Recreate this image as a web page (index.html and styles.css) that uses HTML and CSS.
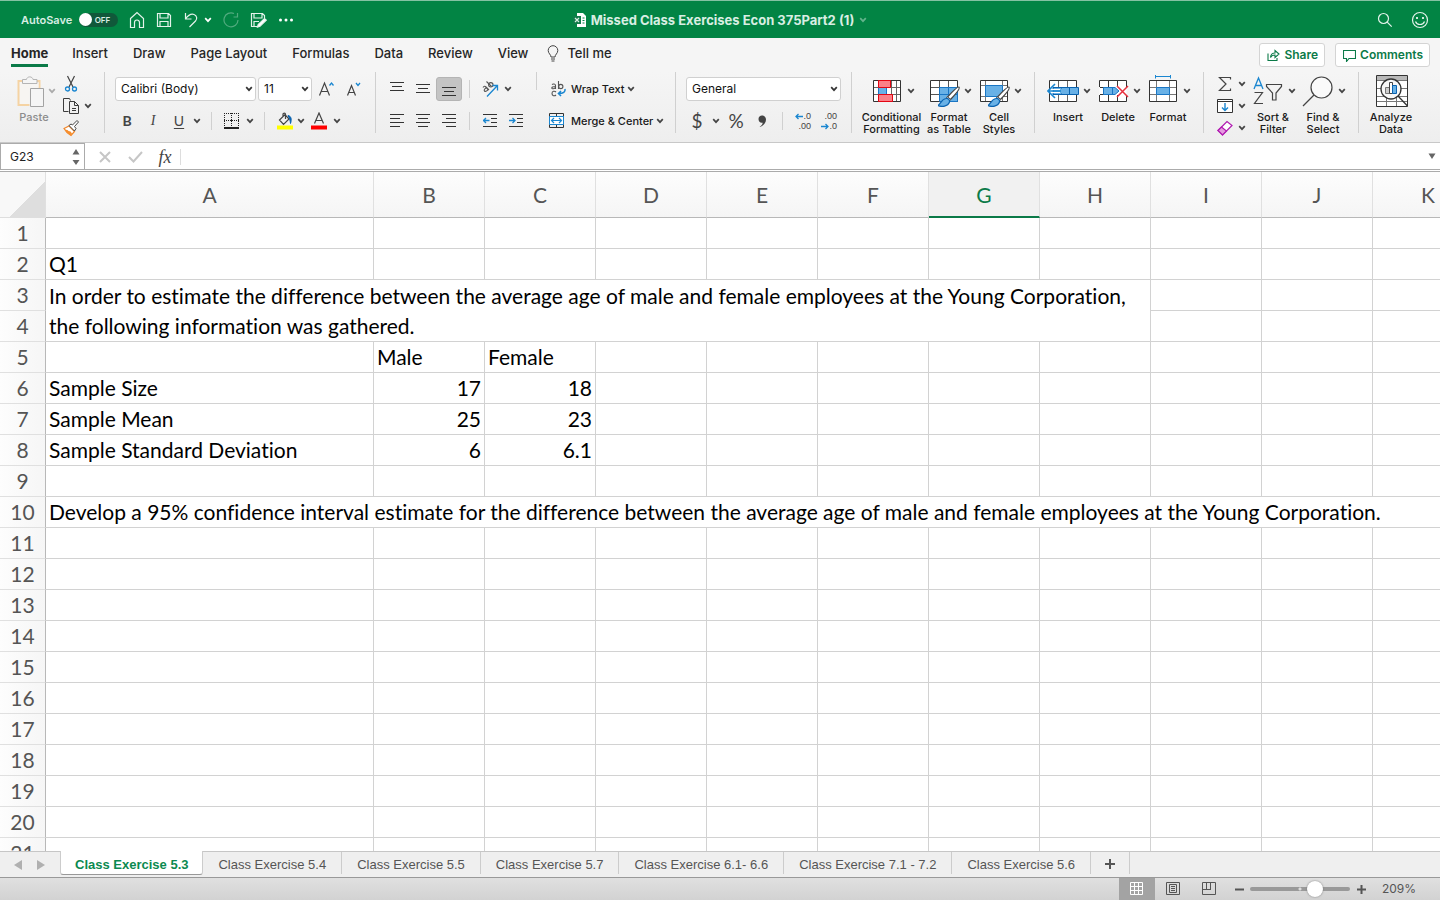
FILE: index.html
```html
<!DOCTYPE html>
<html lang="en">
<head>
<meta charset="utf-8">
<meta name="viewport" content="width=device-width, initial-scale=1">
<title>Missed Class Exercises Econ 375Part2 (1)</title>
<link rel="stylesheet" href="styles.css">
</head>
<body>
<svg width="0" height="0" class="defs" aria-hidden="true">
  <symbol id="chev" viewBox="0 0 8 6"><path d="M1.2 1.2 4 4.2 6.8 1.2" fill="none" stroke="currentColor" stroke-width="1.7"/></symbol>
  <symbol id="brush" viewBox="0 0 22 22"><path d="M21 1.200c1 1-1.500 5-8.500 12.300l-3-2.500C15.500 4.500 20 .3 21 1.200z" fill="#fff" stroke="#444" stroke-width="1.200"/><path d="m9.500 11 3 2.500-1 1.500-3.500-3z" fill="#fff" stroke="#555"/><path d="M8 12.500c2-.3 4.300 1.500 3.300 4C10 20 4 21.500-.5 19.500c3.500-.8 3.500-6.500 8.500-7z" fill="#69b1e6" stroke="#0a63b0" stroke-width="1.200"/></symbol>
</svg>

<header class="titlebar">
  <div class="quick">
    <label class="autosave">AutoSave <input type="checkbox" role="switch"><span class="switch"><span class="off">OFF</span></span></label>
    <button class="tb" aria-label="Home"><svg width="16" height="18" viewBox="0 0 16 18"><path d="M1.500 7.500 8 1.500l6.500 6v9h-4v-5a2.500 2.500 0 0 0-5 0v5h-4z"/></svg></button>
    <button class="tb" aria-label="Save"><svg width="16" height="18" viewBox="0 0 16 18"><path d="M1.500 2.500h11l2 2v11h-13zM4 2.500v4.500h8v-4.500M4 15.500v-5h8v5"/></svg></button>
    <button class="tb undo" aria-label="Undo"><svg width="16" height="18" viewBox="0 0 16 18"><path d="M2.500 2v6h6M2.500 8C5 4.500 8 2.500 11 3.500c3 1 3.500 4.500 1.500 6.500L6.500 16"/></svg></button>
    <button class="tb tiny" aria-label="Undo options"><svg width="8" height="6"><use href="#chev"/></svg></button>
    <button class="tb faded" aria-label="Redo"><svg width="16" height="18" viewBox="0 0 16 18"><path d="M11 2.500A7 7 0 1 0 15 9M10.500 6h4V2"/></svg></button>
    <button class="tb" aria-label="Save as"><svg width="17" height="18" viewBox="0 0 17 18"><path d="M7 15.500H1.500v-13h11l2 2V7M4 2.500V7h8V2.500M4 15.500v-5h5"/><path d="m7.500 16 .7-2.500 6.300-6 1.800 1.700-6.300 6z" fill="#fff"/></svg></button>
    <button class="tb" aria-label="More"><svg width="16" height="18" viewBox="0 0 16 18"><g fill="#fff" stroke="none"><circle cx="2.500" cy="9" r="1.500"/><circle cx="8" cy="9" r="1.500"/><circle cx="13.500" cy="9" r="1.500"/></g></svg></button>
  </div>
  <h1 class="doc"><svg width="13" height="15" viewBox="0 0 13 15"><path d="M4 1h6l3 3v11H4z" fill="#fff"/><path d="M9.500 6h2M9.500 8.500h2M9.500 11h2" stroke="#028444"/><path d="M0 4h8v8H0z" fill="#107c4a"/><path d="m2 6 4 4M6 6l-4 4" stroke="#d9eee3" stroke-width="1.200"/></svg>Missed Class Exercises Econ 375Part2 (1)<svg class="dim" width="8" height="6"><use href="#chev"/></svg></h1>
  <div class="tb-right">
    <button class="tb" aria-label="Search"><svg width="16" height="16" viewBox="0 0 16 16"><circle cx="6.500" cy="6.500" r="5"/><path d="m10.200 10.200 4.500 4.500"/></svg></button>
    <button class="tb" aria-label="Feedback"><svg width="18" height="18" viewBox="0 0 18 18"><circle cx="9" cy="9" r="7.500"/><path d="M4.500 10.500c1.500 4 7.500 4 9 0"/><path d="M6 6v2M12 6v2" stroke-width="1.800"/></svg></button>
  </div>
</header>

<nav class="tabs">
  <button class="tab on">Home</button>
  <button class="tab">Insert</button>
  <button class="tab">Draw</button>
  <button class="tab">Page Layout</button>
  <button class="tab">Formulas</button>
  <button class="tab">Data</button>
  <button class="tab">Review</button>
  <button class="tab">View</button>
  <button class="tab tell"><svg width="12" height="17" viewBox="0 0 12 17" fill="none" stroke="#444"><path d="M4 12c0-2.500-2.800-3.500-2.800-6.500a4.800 4.800 0 0 1 9.600 0c0 3-2.800 4-2.800 6.500zM4 14h4M4.500 16h3"/></svg>Tell me</button>
  <div class="actions">
    <button class="act"><svg width="13" height="12" viewBox="0 0 13 12"><path d="M1 4.500v7h9V9M3.500 8.500c0-3 2-4.500 4.500-4.500V1.500L12 5 8 8.500V6C6 6 4.500 6.500 3.500 8.500z"/></svg>Share</button>
    <button class="act"><svg width="13" height="13" viewBox="0 0 13 13"><path d="M.5 1.500h12v8H6l-2.500 3v-3h-3z"/></svg>Comments</button>
  </div>
</nav>

<section class="ribbon" aria-label="Home ribbon">
  <div class="group g-clip">
    <button class="big paste"><span class="icons"><svg width="32" height="32" viewBox="0 0 32 32" fill="none"><path d="M7.500 6h-4v24h11M22 6h2.500v7" stroke="#f5d3a3" stroke-width="2"/><path d="M5 7.500h18.500v5h-9V29H5z" fill="#f7f5f2"/><path d="M7.500 8.500v-4h4c.5-3.500 6-3.500 6.500 0h4v4z" fill="#f5f5f5" stroke="#b5b5b5"/><path d="M15.500 13.500h13v18h-13z" fill="#f5f5f5" stroke="#a3a3a3"/></svg><svg class="chev" width="8" height="6"><use href="#chev"/></svg></span>Paste</button>
    <div class="stack">
      <button class="sm" aria-label="Cut"><svg width="16" height="18" viewBox="0 0 16 18" fill="none"><path d="m4.500 1 5.500 11M11.500 1 6 12" stroke="#444" stroke-width="1.200"/><circle cx="4.500" cy="14" r="2" stroke="#1a86d0" stroke-width="1.300"/><circle cx="11.500" cy="14" r="2" stroke="#1a86d0" stroke-width="1.300"/></svg></button>
      <button class="sm" aria-label="Copy"><svg width="16" height="18" viewBox="0 0 16 18" fill="none" stroke="#3c3c3c"><path d="M5.500 14.500h-5v-13h6l1 2M6.500 4.500h5l4 4v8h-9zM11.500 4.500v4h4M9 11.500h4M9 13.500h4"/></svg><svg class="chev" width="8" height="6"><use href="#chev"/></svg></button>
      <button class="sm" aria-label="Format painter"><svg width="16" height="18" viewBox="0 0 16 18"><path d="M1 9.500 6 7l5.500 5.500-3.500 4C5 15 3 13 1 9.500z" fill="#fff" stroke="#f0862a" stroke-width="1.200"/><path d="m1.500 10.500 3 .5 1 1 2 .5 1.500 2-1 2C5 15 3.500 13.500 1.500 10.500z" fill="#f78f2e"/><path d="m6 6.500 2-1.500 1.500 1L14 1.500 15.500 3l-4 4.500 1.500 2-1.500 2.500z" fill="#fff" stroke="#444"/></svg></button>
    </div>
  </div>

  <div class="group g-font">
    <div class="rows">
      <div class="row fields">
        <span class="pick w-font"><select aria-label="Font"><option>Calibri (Body)</option></select><svg width="8" height="6"><use href="#chev"/></svg></span>
        <span class="pick w-size"><select aria-label="Font size"><option>11</option></select><svg width="8" height="6"><use href="#chev"/></svg></span>
        <button class="ib" aria-label="Increase font size"><svg width="18" height="18" viewBox="0 0 18 18" fill="none"><path d="M1.500 15.500 6.500 3l5 12.500M3.200 11.500h6.600" stroke="#444" stroke-width="1.200"/><path d="m11.500 5.500 2-2.500 2 2.500" stroke="#1a86d0" stroke-width="1.300"/></svg></button>
        <button class="ib" aria-label="Decrease font size"><svg width="18" height="18" viewBox="0 0 18 18" fill="none"><path d="m3.500 15.500 4-10 4 10M4.800 12.500h5.400" stroke="#444" stroke-width="1.200"/><path d="m12 3 2 2.500L16 3" stroke="#1a86d0" stroke-width="1.300"/></svg></button>
      </div>
      <div class="row">
        <button class="ib b">B</button><button class="ib i">I</button><button class="ib u">U</button>
        <button class="cv" aria-label="Underline options"><svg width="8" height="6"><use href="#chev"/></svg></button>
        <span class="sep wide"></span>
        <button class="ib n" aria-label="Borders"><svg width="16" height="16" viewBox="0 0 16 16" fill="none" stroke="#222"><path d="M0 .5h15M0 7.500h15M.5 0v14M7.500 0v14M14.500 0v14" stroke-dasharray="1 1"/><path d="M6 7.500h3M7.500 6v3"/><path d="M0 15h15" stroke-width="2"/></svg></button>
        <button class="cv m2" aria-label="Border options"><svg width="8" height="6"><use href="#chev"/></svg></button>
        <span class="sep wide"></span>
        <button class="ib n" aria-label="Fill color"><svg width="18" height="18" viewBox="0 0 18 18" fill="none"><path d="M3.500 8 9 2.500 13 7l-5.500 5.500zM7 4.500V2.200c0-1.500 2.500-1.500 2.500 0V7" stroke="#444" stroke-width="1.200"/><path d="M12 3.500C15 4 16 7 14.500 11.500 14.200 9 14 7 12 3.500z" fill="#0a63b0" stroke="#0a63b0"/><path d="M1 13.500h16v4H1z" fill="#ff0"/></svg></button>
        <button class="cv" aria-label="Fill color options"><svg width="8" height="6"><use href="#chev"/></svg></button>
        <button class="ib n m2" aria-label="Font color"><svg width="18" height="18" viewBox="0 0 18 18" fill="none"><path d="M4.500 11.500 9 1l4.500 10.500M6 8.500h6" stroke="#444" stroke-width="1.200"/><path d="M1 13.500h16v4H1z" fill="#f00"/></svg></button>
        <button class="cv m2" aria-label="Font color options"><svg width="8" height="6"><use href="#chev"/></svg></button>
      </div>
    </div>
  </div>

  <div class="group g-align">
    <div class="rows">
      <div class="row">
        <button class="ib" aria-label="Top align"><svg class="ln" width="14" height="14" viewBox="0 0 14 14"><path d="M0 .5h14M2 4.500h10M0 8.500h14"/></svg></button>
        <button class="ib" aria-label="Middle align"><svg class="ln" width="14" height="14" viewBox="0 0 14 14"><path d="M0 2.500h14M2 6.500h10M0 10.500h14"/></svg></button>
        <button class="ib" aria-label="Bottom align" aria-pressed="true"><svg class="ln" width="14" height="14" viewBox="0 0 14 14"><path d="M0 5.500h14M2 9.500h10M0 13.500h14"/></svg></button>
        <span class="sep"></span>
        <button class="ib" aria-label="Orientation"><svg width="18" height="18" viewBox="0 0 18 18" fill="none"><g stroke="#555" stroke-width="1.100"><path d="M2 7.500c1-1.500 2-1.500 3-.5l3 3M5.500 7.500C4 8.500 2.500 10 3.500 11s3 0 3.500-2M5.500 1.500l5 5"/><circle cx="9.800" cy="4.800" r="2.200"/></g><path d="M6 16.500 16 6M11.500 5.500H16.500V10.500" stroke="#1a86d0" stroke-width="1.300"/></svg></button>
        <button class="cv" aria-label="Orientation options"><svg width="8" height="6"><use href="#chev"/></svg></button>
      </div>
      <div class="row">
        <button class="ib" aria-label="Align left"><svg class="ln" width="14" height="14" viewBox="0 0 14 14"><path d="M0 .5h14M0 4.500h10M0 8.500h14M0 12.500h10"/></svg></button>
        <button class="ib" aria-label="Center"><svg class="ln" width="14" height="14" viewBox="0 0 14 14"><path d="M0 .5h14M2 4.500h10M0 8.500h14M2 12.500h10"/></svg></button>
        <button class="ib" aria-label="Align right"><svg class="ln" width="14" height="14" viewBox="0 0 14 14"><path d="M0 .5h14M4 4.500h10M0 8.500h14M4 12.500h10"/></svg></button>
        <span class="sep"></span>
        <button class="ib" aria-label="Decrease indent"><svg class="ln" width="14" height="14" viewBox="0 0 14 14"><path d="M0 .5h14M8 4.500h6M8 8.500h6M0 12.500h14"/><path d="M6.500 6.500h-6M3 4 .5 6.500 3 9" stroke="#1a86d0" stroke-width="1.300"/></svg></button>
        <button class="ib" aria-label="Increase indent"><svg class="ln" width="14" height="14" viewBox="0 0 14 14"><path d="M0 .5h14M8 4.500h6M8 8.500h6M0 12.500h14"/><path d="M0 6.500h6M3.500 4 6 6.500 3.500 9" stroke="#1a86d0" stroke-width="1.300"/></svg></button>
      </div>
    </div>
    <span class="sep short"></span>
    <div class="rows">
      <button class="row txt"><svg width="20" height="18" viewBox="0 0 20 18" fill="none"><g stroke="#555" stroke-width="1.100"><path d="M5 4.500c1-.8 3.500-.8 3.500 1V9M8.500 6.500c-2 0-3.700 0-3.700 1.400S7.500 9 8.500 7.500M11.500 1v8"/><circle cx="13.800" cy="6.500" r="2.100"/><path d="M9 12c-1.500-1.500-4-.8-4 1.500s2.500 3 4 1.500"/></g><path d="M18 9c.5 3-1.500 4.500-6.500 4.500M14 11l-2.500 2.500L14 16" stroke="#1a86d0" stroke-width="1.600"/></svg>Wrap Text<svg class="chev" width="8" height="6"><use href="#chev"/></svg></button>
      <button class="row txt"><svg width="20" height="18" viewBox="0 0 20 18" fill="none"><path d="M2.500 1.500h14v14h-14zM9.500 1v3M9.500 13v3" stroke="#333"/><path d="M2.500 4.500h14v8h-14z" fill="#fff" stroke="#1a86d0"/><path d="M5 8.500h9M7 6 4.500 8.500 7 11M12 6l2.500 2.500L12 11" stroke="#1a86d0" stroke-width="1.200"/></svg>Merge &amp; Center<svg class="chev" width="8" height="6"><use href="#chev"/></svg></button>
    </div>
  </div>

  <div class="group g-num">
    <div class="rows">
      <div class="row"><span class="pick w-num"><select aria-label="Number format"><option>General</option></select><svg width="8" height="6"><use href="#chev"/></svg></span></div>
      <div class="row">
        <button class="ib n sym" aria-label="Currency">$</button>
        <button class="cv m" aria-label="Currency options"><svg width="8" height="6"><use href="#chev"/></svg></button>
        <button class="ib m2 sym" aria-label="Percent">%</button>
        <button class="ib" aria-label="Comma style"><svg width="10" height="14" viewBox="0 0 10 14"><path d="M5 1.500c2.500 0 4 1.700 4 4 0 4-3 6.500-6.500 7.500 2-1.500 3-2.500 3.200-4.300C3.300 9.300 1.500 7.500 1.500 5c0-2 1.500-3.500 3.500-3.500z" fill="#444"/></svg></button>
        <span class="sep"></span>
        <button class="ib dec" aria-label="Increase decimal"><span><svg width="8" height="7" viewBox="0 0 8 7"><path d="M8 3.500H1M3.500 1 1 3.500 3.500 6"/></svg>.0</span><span>.00</span></button>
        <button class="ib dec" aria-label="Decrease decimal"><span>.00</span><span><svg width="8" height="7" viewBox="0 0 8 7"><path d="M0 3.500h7M4.500 1 7 3.500 4.500 6"/></svg>.0</span></button>
      </div>
    </div>
  </div>

  <div class="group g-style">
    <button class="big w-cond"><span class="icons"><svg width="32" height="32" viewBox="0 0 32 32" fill="none"><path d="M2.500 5.500h27v21h-27z" fill="#fff" stroke="#333"/><path d="M3 12.500h26M3 19.500h26M20.500 6v20M25.500 6v20" stroke="#666"/><path d="M7.500 12.500h8v7h-8z" fill="#69b1e6" stroke="#1976c5"/><path d="M7.500 5.500h12v7h-12zM7.500 19.500h14v7h-14z" fill="#fb8088" stroke="#e30613"/></svg><svg class="chev" width="8" height="6"><use href="#chev"/></svg></span>Conditional<br>Formatting</button>
    <button class="big"><span class="icons"><svg width="32" height="32" viewBox="0 0 32 32" fill="none"><path d="M2.500 5.500h27v21h-27z" fill="#fff" stroke="#333"/><path d="M11 12h18v14H11z" fill="#69b1e6"/><path d="M3 12.500h26M3 19.500h8M11.500 6v20M20.500 6v6" stroke="#555"/><path d="M11.500 12.500h18v14h-18zM11 19.500h18M20.500 13v14" stroke="#1976c5"/><use href="#brush" x="10" y="11" width="22" height="22"/></svg><svg class="chev" width="8" height="6"><use href="#chev"/></svg></span>Format<br>as Table</button>
    <button class="big"><span class="icons"><svg width="32" height="32" viewBox="0 0 32 32" fill="none"><path d="M2.500 5.500h27v21h-27z" fill="#fff" stroke="#333"/><path d="M7.500 6v20M24.500 6v20M3 10.500h26M3 21.500h26" stroke="#777"/><path d="M7.500 10.500h17v11h-17z" fill="#69b1e6" stroke="#1976c5"/><use href="#brush" x="10" y="11" width="22" height="22"/></svg><svg class="chev" width="8" height="6"><use href="#chev"/></svg></span>Cell<br>Styles</button>
  </div>

  <div class="group g-cells">
    <button class="big"><span class="icons"><svg width="32" height="32" viewBox="0 0 32 32" fill="none"><path d="M2.500 5.500h27v21h-27z" fill="#fff" stroke="#333"/><path d="M11.500 6v20M20.500 6v20" stroke="#666"/><path d="M6 12.500h25.500v7H6zM22.500 12.500v7M14.500 12.500v1M14.500 18.500v1" fill="#69b1e6" stroke="#0a63b0"/><path d="M13 14.500H5v3h8" stroke="#fff"/><path d="M14 16H1M8 9l-7 7 7 7" stroke="#1a86d0" stroke-width="1.600"/></svg><svg class="chev" width="8" height="6"><use href="#chev"/></svg></span>Insert</button>
    <button class="big"><span class="icons"><svg width="32" height="32" viewBox="0 0 32 32" fill="none"><path d="M2.500 5.500h27v21h-27z" fill="#fff"/><path d="M2.500 12V5.500h27V12M2.500 20v6.500h27V21M3 12.500h4M3 19.500h4M11.500 6v6M20.500 6v6M11.500 20v6M20.500 20v6" stroke="#333"/><path d="M6.500 12.500H18l4 3.500-4 3.500H6.500zM15.500 12.500v7" fill="#69b1e6" stroke="#1976c5"/><path d="m20 11 11 11M31 11 20 22" stroke="#e8313e" stroke-width="1.500"/></svg><svg class="chev" width="8" height="6"><use href="#chev"/></svg></span>Delete</button>
    <button class="big"><span class="icons"><svg width="32" height="32" viewBox="0 0 32 32" fill="none"><path d="M2.500 5.500h27v21h-27z" fill="#fff" stroke="#333"/><path d="M9.500 6v20M22.500 6v20M3 12.500h26M3 19.500h26" stroke="#777"/><path d="M9.500 12.500h13v7h-13z" fill="#69b1e6" stroke="#1976c5"/><path d="M8.500 1.500h15M8.500 0v3.500M23.500 0v3.500" stroke="#1a86d0"/></svg><svg class="chev" width="8" height="6"><use href="#chev"/></svg></span>Format</button>
  </div>

  <div class="group g-edit">
    <div class="stack">
      <button class="sm" aria-label="AutoSum"><svg width="16" height="18" viewBox="0 0 16 18" fill="none" stroke="#444" stroke-width="1.200"><path d="M13.500 4.500v-2h-11L9 9l-6.500 6.500h11v-2"/></svg><svg class="chev" width="8" height="6"><use href="#chev"/></svg></button>
      <button class="sm" aria-label="Fill"><svg width="16" height="18" viewBox="0 0 16 18" fill="none"><path d="M.5 2.500h15v13H.5zM.5 4.500h15" fill="#fff" stroke="#333"/><path d="M8 6v7M5 10.500l3 3 3-3" stroke="#1a86d0" stroke-width="1.400"/></svg><svg class="chev" width="8" height="6"><use href="#chev"/></svg></button>
      <button class="sm" aria-label="Clear"><svg width="16" height="18" viewBox="0 0 16 18"><path d="m1 11.500 9-9 5 4-9.500 9.500z" fill="#fff" stroke="#b01ab0" stroke-width="1.200"/><path d="M1 11.500 4.500 8l5 4-4 4z" fill="#e59ae0" stroke="#b01ab0" stroke-width="1.200"/></svg><svg class="chev" width="8" height="6"><use href="#chev"/></svg></button>
    </div>
    <button class="big"><span class="icons"><svg width="32" height="32" viewBox="0 0 32 32" fill="none"><path d="M2 14 6.500 3 11 14M3.500 10.500h6" stroke="#1a86d0" stroke-width="1.300"/><path d="M2.500 17.500h8l-8 11h8.500M14.500 9.500h15v2L24 18v7h-3.500v-7l-6-6.500z" stroke="#444" stroke-width="1.200"/></svg><svg class="chev" width="8" height="6"><use href="#chev"/></svg></span>Sort &amp;<br>Filter</button>
    <button class="big"><span class="icons"><svg width="32" height="32" viewBox="0 0 32 32" fill="none" stroke="#444" stroke-width="1.200"><circle cx="19.500" cy="12.500" r="10.500" fill="#fafafa"/><path d="M12 20 1 31"/></svg><svg class="chev" width="8" height="6"><use href="#chev"/></svg></span>Find &amp;<br>Select</button>
  </div>

  <div class="group g-data">
    <button class="big"><span class="icons"><svg width="32" height="32" viewBox="0 0 32 32" fill="none"><path d="M.5.5h31v31H.5z" fill="#fff" stroke="#333"/><path d="M1 1h30v4H1z" fill="#b8b8b8"/><path d="M1 5.500h30M1 13.500h30M1 21.500h30M1 26.500h30M10.500 22v9M20.500 22v9" stroke="#777"/><circle cx="15" cy="14" r="10" fill="#f8f8f8" stroke="#333" stroke-width="1.300"/><path d="m22 21 9.500 10" stroke="#333" stroke-width="1.300"/><path d="M9.500 12.500h4v6h-4z" fill="#ccc" stroke="#777"/><path d="M13.500 7.500h3v11h-3z" fill="#fff" stroke="#444"/><path d="M16.500 10.500h4v8h-4z" fill="#69b1e6" stroke="#0a63b0"/></svg></span>Analyze<br>Data</button>
  </div>
</section>

<section class="formula">
  <div class="namebox"><input type="text" value="G23" aria-label="Name box"><svg width="8" height="20" viewBox="0 0 8 20"><path d="M4 2 7.500 7.500h-7zM4 18 .5 13h7z" fill="#666"/></svg></div>
  <button class="fb" aria-label="Cancel"><svg width="14" height="14" viewBox="0 0 14 14"><path d="m2 2 10 10M12 2 2 12"/></svg></button>
  <button class="fb" aria-label="Enter"><svg width="15" height="14" viewBox="0 0 15 14"><path d="m1 7 4.500 4.500L14 2"/></svg></button>
  <button class="fb fx" aria-label="Insert function">fx</button>
  <input class="entry" type="text" aria-label="Formula">
  <button class="fb exp" aria-label="Expand formula bar"><svg width="8" height="6" viewBox="0 0 8 6"><path d="M.5.5h7L4 6z" fill="#666" stroke="none"/></svg></button>
</section>

<main class="sheet">
<table>
  <colgroup><col class="c-h"><col class="c-a"><col span="10" class="c-n"></colgroup>
  <thead><tr><th class="corner" aria-label="Select all"></th><th>A</th><th>B</th><th>C</th><th>D</th><th>E</th><th>F</th><th class="sel">G</th><th>H</th><th>I</th><th>J</th><th>K</th></tr></thead>
  <tbody>
  <tr><th>1</th><td></td><td></td><td></td><td></td><td></td><td></td><td></td><td></td><td></td><td></td><td></td></tr>
  <tr><th>2</th><td>Q1</td><td></td><td></td><td></td><td></td><td></td><td></td><td></td><td></td><td></td><td></td></tr>
  <tr><th>3</th><td colspan="8" rowspan="2" class="merged">In order to estimate the difference between the average age of male and female employees at the Young Corporation,<br>the following information was gathered.</td><td></td><td></td><td></td></tr>
  <tr><th>4</th><td></td><td></td><td></td></tr>
  <tr><th>5</th><td></td><td>Male</td><td>Female</td><td></td><td></td><td></td><td></td><td></td><td></td><td></td><td></td></tr>
  <tr><th>6</th><td>Sample Size</td><td class="num">17</td><td class="num">18</td><td></td><td></td><td></td><td></td><td></td><td></td><td></td><td></td></tr>
  <tr><th>7</th><td>Sample Mean</td><td class="num">25</td><td class="num">23</td><td></td><td></td><td></td><td></td><td></td><td></td><td></td><td></td></tr>
  <tr><th>8</th><td>Sample Standard Deviation</td><td class="num">6</td><td class="num">6.1</td><td></td><td></td><td></td><td></td><td></td><td></td><td></td><td></td></tr>
  <tr><th>9</th><td></td><td></td><td></td><td></td><td></td><td></td><td></td><td></td><td></td><td></td><td></td></tr>
  <tr><th>10</th><td colspan="11">Develop a 95% confidence interval estimate for the difference between the average age of male and female employees at the Young Corporation.</td></tr>
  <tr><th>11</th><td></td><td></td><td></td><td></td><td></td><td></td><td></td><td></td><td></td><td></td><td></td></tr>
  <tr><th>12</th><td></td><td></td><td></td><td></td><td></td><td></td><td></td><td></td><td></td><td></td><td></td></tr>
  <tr><th>13</th><td></td><td></td><td></td><td></td><td></td><td></td><td></td><td></td><td></td><td></td><td></td></tr>
  <tr><th>14</th><td></td><td></td><td></td><td></td><td></td><td></td><td></td><td></td><td></td><td></td><td></td></tr>
  <tr><th>15</th><td></td><td></td><td></td><td></td><td></td><td></td><td></td><td></td><td></td><td></td><td></td></tr>
  <tr><th>16</th><td></td><td></td><td></td><td></td><td></td><td></td><td></td><td></td><td></td><td></td><td></td></tr>
  <tr><th>17</th><td></td><td></td><td></td><td></td><td></td><td></td><td></td><td></td><td></td><td></td><td></td></tr>
  <tr><th>18</th><td></td><td></td><td></td><td></td><td></td><td></td><td></td><td></td><td></td><td></td><td></td></tr>
  <tr><th>19</th><td></td><td></td><td></td><td></td><td></td><td></td><td></td><td></td><td></td><td></td><td></td></tr>
  <tr><th>20</th><td></td><td></td><td></td><td></td><td></td><td></td><td></td><td></td><td></td><td></td><td></td></tr>
  <tr><th>21</th><td></td><td></td><td></td><td></td><td></td><td></td><td></td><td></td><td></td><td></td><td></td></tr>
  </tbody>
</table>
</main>

<nav class="sheets">
  <button class="arrow" aria-label="Previous sheet"><svg width="8" height="12" viewBox="0 0 8 12"><path d="M8 1v10L0 6z"/></svg></button>
  <button class="arrow" aria-label="Next sheet"><svg width="8" height="12" viewBox="0 0 8 12"><path d="M0 1v10l8-5z"/></svg></button>
  <button class="st on">Class Exercise 5.3</button>
  <button class="st">Class Exercise 5.4</button>
  <button class="st">Class Exercise 5.5</button>
  <button class="st">Class Exercise 5.7</button>
  <button class="st">Class Exercise 6.1- 6.6</button>
  <button class="st">Class Exercise 7.1 - 7.2</button>
  <button class="st">Class Exercise 5.6</button>
  <button class="st add" aria-label="New sheet"><svg width="10" height="10" viewBox="0 0 10 10"><path d="M5 0v10M0 5h10" stroke="#555" stroke-width="2"/></svg></button>
</nav>

<footer class="status">
  <button class="view on" aria-label="Normal view"><svg width="14" height="14" viewBox="0 0 14 14"><path d="M.5.5h12v12H.5zM4.500 0v13M8.500 0v13M0 4.500h13M0 8.500h13"/></svg></button>
  <button class="view" aria-label="Page layout view"><svg width="14" height="14" viewBox="0 0 14 14"><path d="M.5.5h13v12H.5zM3.500 2.500h7v8h-7zM5 4.500h4M5 6.500h4M5 8.500h4"/></svg></button>
  <button class="view" aria-label="Page break view"><svg width="14" height="14" viewBox="0 0 14 14"><path d="M.5.500h13v12H.5zM4.500 0v7.500M8.500 0v7.500M0 7.500h9"/></svg></button>
  <button class="zm" aria-label="Zoom out"><svg width="9" height="9" viewBox="0 0 9 9"><path d="M0 4.500h9"/></svg></button>
  <input type="range" min="0" max="100" value="68" aria-label="Zoom">
  <button class="zm" aria-label="Zoom in"><svg width="9" height="9" viewBox="0 0 9 9"><path d="M0 4.500h9M4.500 0v9"/></svg></button>
  <button class="pct">209%</button>
</footer>
</body>
</html>
```
FILE: styles.css
```css
* { box-sizing: border-box; }
body { margin: 0; height: 100vh; display: flex; flex-direction: column; overflow: hidden; background: #fff; color: #262626; font: 13px/16px Inter, "Liberation Sans", sans-serif; }
button, input, select { font: inherit; color: inherit; margin: 0; padding: 0; border: 0; background: none; border-radius: 0; }
svg { display: block; flex: none; }
.defs { position: absolute; }

.titlebar { flex: none; height: 38px; display: grid; grid-template-columns: 1fr auto 1fr; align-items: center; background: #028444; border-top: 1px solid #84c2a2; color: #d9eee3; padding: 0 11px; }
.quick, .tb-right { display: flex; align-items: center; gap: 11px; }
.quick { padding-left: 10px; }
.tb-right { justify-content: flex-end; gap: 18px; }
.autosave { display: flex; align-items: center; gap: 7px; font-size: 11px; font-weight: 600; }
.autosave input { position: absolute; opacity: 0; }
.switch { display: flex; align-items: center; justify-content: space-between; width: 39px; height: 14px; border-radius: 7px; background: #10583a; padding-right: 8px; }
.switch::before { content: ""; width: 13px; height: 13px; border-radius: 50%; background: #fff; }
.off { font-size: 8px; line-height: 14px; }
.tb { display: flex; }
.tb svg { fill: none; stroke: #e4f3eb; stroke-width: 1.2; }
.tb.tiny { color: #fff; margin-left: -6px; }
.tb.faded { opacity: .35; }
.doc { display: flex; align-items: center; gap: 5px; margin: 0; font-size: 13px; line-height: 16px; font-weight: 700; }
.dim { opacity: .45; }

.tabs { flex: none; display: flex; align-items: center; height: 34px; gap: 24px; padding: 0 10px 0 11px; background: #f5f5f5; }
.tab { font-weight: 500; line-height: 20px; height: 23px; margin-bottom: 5px; align-self: flex-end; white-space: nowrap; border-bottom: 3px solid transparent; }
.tab.on { font-weight: 700; border-color: #0b7a48; height: 24px; padding-bottom: 1px; }
.tab:not(.on) { padding-right: 1px; height: 24px; padding-bottom: 1px; }
.tell { display: flex; align-items: center; gap: 8px; margin-left: -6px; }
.actions { margin-left: auto; display: flex; gap: 10px; }
.act { display: flex; align-items: center; gap: 4px; height: 24px; padding: 0 6px 0 7px; border: 1px solid #d4d4d4; border-radius: 3px; background: #fff; color: #0b7a48; font-size: 12px; font-weight: 600; }
.act svg { fill: none; stroke: #0b7a48; stroke-width: 1.1; }

.ribbon { flex: none; display: flex; height: 71px; padding-bottom: 9px; background: linear-gradient(#f5f5f5, #eee); border-bottom: 1px solid #c8c8c8; font-size: 11px; line-height: 12px; color: #1a1a1a; }
.group { flex: none; display: flex; align-items: flex-start; border-right: 1px solid #d0d0d0; }
.group:last-child { border-right: 0; }
.g-clip { width: 105px; padding-left: 12px; }
.g-font { width: 271px; padding-left: 9px; }
.g-align { width: 300px; padding-left: 8px; }
.g-num { width: 176px; padding-left: 10px; }
.g-style { width: 183px; padding-left: 7px; }
.g-cells { width: 169px; padding-left: 8px; }
.g-edit { width: 155px; padding-left: 13px; }
.g-data { flex: 1; padding-left: 7px; }
.rows { display: flex; flex-direction: column; gap: 8px; padding-top: 5px; }
.row { display: flex; align-items: center; height: 24px; }
.big { width: 50px; padding-top: 3px; flex: none; font-weight: 500; text-align: center; white-space: nowrap; display: flex; flex-direction: column; align-items: center; }
.w-cond { width: 65px; }
.icons { display: flex; align-items: center; gap: 4px; padding-left: 2px; margin-bottom: 4px; }
.chev { color: #444; }
.paste { width: 44px; color: #8c8c8c; }
.paste .icons { gap: 1px; }
.paste .chev { color: #aaa; }
.stack { flex: none; display: flex; flex-direction: column; padding-top: 1px; width: 31px; }
.g-clip .stack { margin-left: 7px; }
.sm { display: flex; align-items: center; gap: 5px; height: 22px; }
.ib { display: flex; align-items: center; justify-content: center; width: 26px; height: 24px; color: #444; }
.ib.n { width: 22px; }
.ib[aria-pressed="true"] { background: #c4c4c4; border-radius: 3px; border: 1px solid #b4b4b4; }
.b { font-size: 14px; font-weight: 700; font-family: Lato, sans-serif; }
.i { font-size: 14px; font-style: italic; font-family: "Liberation Serif", serif; }
.u { font-size: 14px; text-decoration: underline; font-family: Lato, sans-serif; text-underline-offset: 2px; }
.cv { display: flex; align-items: center; justify-content: center; width: 10px; height: 24px; color: #444; }
.m { margin-left: 3px; }
.m2 { margin-left: 2px; }
.sep { width: 1px; height: 18px; background: #d0d0d0; margin: 0 7px; }
.sep.wide { margin: 0 9px; }
.sep.short { margin: 0 10px 0 7px; }
.fields { padding-left: 1px; }
.pick { position: relative; display: block; height: 24px; margin-right: 2px; }
.pick select { appearance: none; width: 100%; height: 24px; border: 1px solid #d0d0d0; border-radius: 3px; background: #fff; padding: 0 5px; font-size: 12px; color: #111; }
.pick svg { position: absolute; right: 3px; top: 9px; pointer-events: none; color: #333; }
.w-font { width: 141px; }
.w-size { width: 54px; }
.w-num { width: 155px; margin: 0; }
.ln { fill: none; stroke: #333; stroke-width: 1; }
.txt { gap: 4px; font-weight: 500; }
.txt .chev { margin-left: -1px; }
.sym { font-size: 19px; line-height: 24px; font-family: Lato, sans-serif; }
.dec { flex-direction: column; align-items: flex-end; padding-right: 5px; font: 9px/10px "Liberation Sans", sans-serif; }
.dec span { display: flex; align-items: center; height: 10px; }
.dec svg { fill: none; stroke: #1a86d0; stroke-width: 1.3; }

.formula { flex: none; display: flex; align-items: center; height: 29px; background: #fff; border-bottom: 1px solid #ababab; box-shadow: inset 0 -1px #fff, inset 0 -2px #ababab; }
.namebox { display: flex; align-items: center; width: 85px; height: 26px; border: 1px solid #ababab; border-bottom: 0; align-self: flex-start; padding-right: 4px; }
.namebox input { flex: 1; min-width: 0; padding-left: 9px; font-size: 12px; color: #222; }
.fb { display: flex; align-items: center; justify-content: center; width: 30px; height: 24px; padding-bottom: 1px; }
.fb svg { fill: none; stroke: #c6c6c6; stroke-width: 2; }
.namebox + .fb { margin-left: 5px; }
.fx { font: italic 18px/22px "Liberation Serif", serif; color: #444; }
.entry { flex: 1; height: 16px; border-left: 1px solid #ddd; padding-left: 6px; }
.exp { width: 16px; padding-bottom: 3px; }

.sheet { flex: 1; min-height: 0; overflow: hidden; background: #fff; }
table { border-collapse: separate; border-spacing: 0; table-layout: fixed; width: 1484px; font: 21px/30px Lato, sans-serif; font-variant-ligatures: no-common-ligatures; color: #000; }
.c-h { width: 46px; }
.c-a { width: 328px; }
.c-n { width: 111px; }
th { font-weight: 400; color: #555; padding: 0; }
thead th { height: 46px; border-right: 1px solid #e0e0e0; border-bottom: 1px solid #b8b8b8; background: linear-gradient(#fdfdfd, #f5f5f5); }
thead .corner { background: linear-gradient(135deg, transparent 50%, #dedede 50%) right bottom / 36px 36px no-repeat, #f8f8f8; border-bottom-color: #dedede; }
thead .sel { background: #f1f1f1; color: #0b7a48; border-bottom: 2px solid #0b7a48; padding-top: 1px; }
tbody th { height: 31px; border-right: 1px solid #b8b8b8; border-bottom: 1px solid #e0e0e0; background: linear-gradient(90deg, #fdfdfd, #f6f6f6); }
td { height: 31px; padding: 0 4px 0 3px; border-right: 1px solid #d2d2d2; border-bottom: 1px solid #d2d2d2; white-space: nowrap; }
.num { text-align: right; padding-right: 3px; }

.sheets { flex: none; display: flex; height: 26px; background: #efefef; border-top: 1px solid #c6c6c6; font: 13px/22px "Liberation Sans", sans-serif; color: #555; padding-left: 9px; }
.arrow { width: 18px; height: 26px; display: flex; align-items: center; justify-content: center; margin-right: 5px; }
.arrow svg { fill: #b0b0b0; }
.st { height: 22px; padding: 2px 15px 0; border-right: 1px solid #ccc; white-space: nowrap; }
.st.on { margin: -1px 0 0 5px; height: 24px; background: #fff; color: #0b8a50; font-weight: 700; border-bottom: 1px solid #999; border-radius: 0 0 3px 3px; border-left: 1px solid #ccc; padding: 3px 14px 0; }
.st.add { padding: 2px 14px 0; }
.status { flex: none; display: flex; align-items: center; justify-content: flex-end; height: 23px; border-top: 1px solid #999; background: linear-gradient(#e0e0e0, #d2d2d2); padding-right: 24px; font-size: 12px; color: #555; }
.view { width: 36px; height: 22px; display: flex; align-items: center; justify-content: center; }
.view svg { fill: none; stroke: #555; }
.view.on { background: #a3a3a3; }
.view.on svg { stroke: #fff; }
.zm { margin-left: 7px; }
.view + .zm { margin-left: 8px; }
.zm svg { stroke: #555; stroke-width: 2; }
.status input { appearance: none; width: 100px; height: 18px; margin-left: 6px; }
.status input::-webkit-slider-runnable-track { height: 4px; border-radius: 2px; background: radial-gradient(circle at 50px 2px, #ddd 1px, transparent 2px), #999; }
.status input::-webkit-slider-thumb { appearance: none; width: 16px; height: 16px; margin-top: -6px; border-radius: 50%; background: #fff; box-shadow: 0 0 2px #777; }
.pct { margin-left: 16px; }
```
